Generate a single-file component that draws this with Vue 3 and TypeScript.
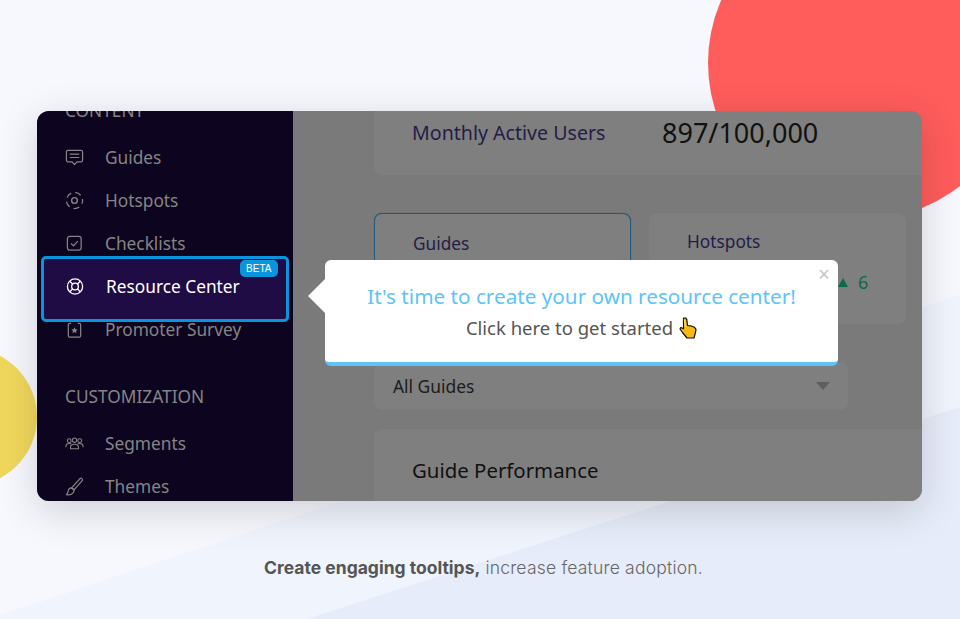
<template>
  <div class="page">
    <div class="band band-light"></div>
    <div class="band band-dark"></div>
    <div class="blob blob-red"></div>
    <div class="blob blob-yellow"></div>

    <div class="window">
      <aside class="sidebar">
        <h4 class="nav-heading first">CONTENT</h4>
        <div class="nav-item">
          <svg class="nav-icon" viewBox="0 0 20 20" fill="none" stroke="currentColor" stroke-width="1.3">
            <path d="M3 2.5h14a1.5 1.5 0 0 1 1.5 1.5v9a1.5 1.5 0 0 1-1.5 1.5h-4.5L10 17.5l-2.500-3H3A1.500 1.500 0 0 1 1.500 13V4A1.500 1.500 0 0 1 3 2.500z" stroke-linejoin="round" />
            <path d="M5 6.500h10M5 10h10" />
          </svg>
          <span>Guides</span>
        </div>
        <div class="nav-item">
          <svg class="nav-icon" viewBox="0 0 20 20" fill="none" stroke="currentColor" stroke-width="1.3">
            <circle cx="10" cy="10" r="8.500" stroke-dasharray="6.500 4.400" stroke-dashoffset="3" />
            <circle cx="10" cy="10" r="3" stroke-width="1.500" />
          </svg>
          <span>Hotspots</span>
        </div>
        <div class="nav-item">
          <svg class="nav-icon" viewBox="0 0 20 20" fill="none" stroke="currentColor" stroke-width="1.3">
            <rect x="2.500" y="2.500" width="14.500" height="14.500" rx="2.500" />
            <path d="M6.500 10l2.500 2.500 4.500-5" />
          </svg>
          <span>Checklists</span>
        </div>
        <div class="nav-item active">
          <svg class="nav-icon" viewBox="0 0 20 20" fill="none" stroke="currentColor" stroke-width="1.400">
            <circle cx="9.500" cy="10" r="8" />
            <circle cx="9.500" cy="10" r="3.500" />
            <path d="M4 4.500l3 3M15 4.500l-3 3M4 15.500l3-3M15 15.500l-3-3" />
          </svg>
          <span>Resource Center</span>
          <em class="badge">BETA</em>
        </div>
        <div class="nav-item">
          <svg class="nav-icon" viewBox="0 0 20 20" fill="none" stroke="currentColor" stroke-width="1.300">
            <path d="M6.500 3.500H5A1.500 1.500 0 0 0 3.500 5v11.500A1.500 1.500 0 0 0 5 18h10a1.500 1.500 0 0 0 1.500-1.500V5A1.500 1.500 0 0 0 15 3.500h-1.500" />
            <path d="M10 7.500l1 2.300 2.400.2-1.800 1.600.6 2.400-2.200-1.300-2.200 1.300.6-2.400L6.600 10l2.400-.2z" fill="currentColor" stroke="none" />
          </svg>
          <span>Promoter Survey</span>
        </div>

        <h4 class="nav-heading">CUSTOMIZATION</h4>
        <div class="nav-item">
          <svg class="nav-icon" viewBox="0 0 20 20" fill="none" stroke="currentColor" stroke-width="1.100">
            <circle cx="4.500" cy="7" r="2" />
            <circle cx="15.500" cy="7" r="2" />
            <circle cx="10" cy="6.500" r="2.300" />
            <path d="M1 14v-1.500c0-1.500 1.200-2.500 3.500-2.500 1 0 1.800.2 2.300.6M19 14v-1.500c0-1.500-1.200-2.500-3.500-2.500-1 0-1.800.2-2.300.6" />
            <path d="M5.800 15.500v-1.500c0-2 1.800-3.300 4.200-3.300s4.200 1.300 4.200 3.300v1.500z" stroke-linejoin="round" />
          </svg>
          <span>Segments</span>
        </div>
        <div class="nav-item">
          <svg class="nav-icon" viewBox="0 0 20 20" fill="none" stroke="currentColor" stroke-width="1.300">
            <path d="M17.500 1.500c1 .6 1.200 1.500.6 2.400L9.500 13.500l-2.500-2L15.500 2c.6-.7 1.300-.9 2-.5z" stroke-linejoin="round" />
            <path d="M7 11.500c-2.500 0-3.500 1.500-3.700 3.500-.1 1.300-.6 2.200-1.800 3.500 3 .5 6.200-.3 7.300-2.200.7-1.100.8-2 .7-2.800z" stroke-linejoin="round" />
          </svg>
          <span>Themes</span>
        </div>
      </aside>

      <main class="main">
        <section class="usage-card">
          <span class="usage-label">Monthly Active Users</span>
          <span class="usage-value">897/100,000</span>
        </section>

        <div class="stat-row">
          <section class="stat-card selected">
            <span class="stat-title">Guides</span>
          </section>
          <section class="stat-card hotspots">
            <span class="stat-title">Hotspots</span>
            <span class="stat-delta"><i class="delta-arrow"></i>6</span>
          </section>
        </div>

        <div class="select-box">
          <span>All Guides</span>
          <i class="caret"></i>
        </div>

        <section class="perf-card">
          <h3>Guide Performance</h3>
        </section>
      </main>

      <div class="tooltip">
        <span class="tooltip-close">×</span>
        <p class="tooltip-title">It's time to create your own resource center!</p>
        <p class="tooltip-sub">
          Click here to get started
          <svg class="hand" viewBox="0 0 18 22">
            <path d="M4.500 1h2l1.300 1.500.7 6 3 .3 4 1.500 1.500 2-.5 3-1.500 5.700H8l-4.500-5.500L1 12l.8-1.500 2.700 1.300z" fill="#f8b912" stroke="#111" stroke-width="1.200" stroke-linejoin="round" />
            <path d="M5.500 2.500l.8 7.500" stroke="#ffd95c" stroke-width="1.500" fill="none" />
          </svg>
        </p>
      </div>
    </div>

    <p class="caption"><strong>Create engaging tooltips,</strong> increase feature adoption.</p>
  </div>
</template>

<script setup lang="ts">
</script>

<style scoped>
.page {
  position: relative;
  width: 960px;
  height: 619px;
  overflow: hidden;
  padding-top: 111px;
  box-sizing: border-box;
  background: #f6f8fd;
  font-family: "Noto Sans", "Open Sans", sans-serif;
}

.band {
  position: absolute;
  inset: 0;
}

.band-light {
  background: #f0f4fd;
  clip-path: polygon(0 615px, 960px 295px, 960px 619px, 0 619px);
}

.band-dark {
  background: #e6ecf9;
  clip-path: polygon(307px 619px, 960px 407px, 960px 619px);
}

.blob {
  position: absolute;
  border-radius: 50%;
}

.blob-red {
  left: 708px;
  top: -93px;
  width: 312px;
  height: 312px;
  background: #ff5c5c;
}

.blob-yellow {
  left: -101.5px;
  top: 348px;
  width: 138px;
  height: 138px;
  background: #f0d75c;
}

.window {
  position: relative;
  display: flex;
  width: 885px;
  height: 390px;
  margin-left: 37px;
  border-radius: 12px;
  background: #7a7a7a;
  overflow: hidden;
  box-shadow: 0 10px 40px rgba(0, 0, 0, 0.16);
}

.sidebar {
  flex: 0 0 256px;
  background: #0d041f;
  color: #858585;
}

.nav-heading {
  height: 30px;
  margin: 31px 0 10px;
  padding-left: 28px;
  font-size: 17.3px;
  font-weight: 400;
  line-height: 30px;
}

.nav-heading.first {
  margin-top: -15px;
}

.nav-item {
  display: flex;
  align-items: center;
  height: 43px;
  padding-left: 28px;
  font-size: 17.3px;
}

.nav-item.active {
  position: relative;
  z-index: 1;
  height: 66px;
  margin: -9px 4px -14px;
  padding: 8px 0 14px 22px;
  box-sizing: border-box;
  border: 3px solid #0a94de;
  border-radius: 5px;
  background: #200c44;
  color: #fff;
}

.nav-icon {
  flex: 0 0 19px;
  width: 19px;
  height: 19px;
  margin-right: 21px;
}

.badge {
  position: absolute;
  top: 1px;
  right: 8px;
  padding: 0 6.5px;
  border-radius: 5px;
  background: #0a94de;
  color: #fff;
  font-family: "Liberation Sans", sans-serif;
  font-size: 10px;
  font-style: normal;
  line-height: 17px;
}

.main {
  flex: 1;
  min-width: 0;
  padding-left: 81px;
}

.usage-card {
  display: flex;
  align-items: center;
  height: 64px;
  padding: 0 0 22px 38px;
  box-sizing: border-box;
  border-radius: 0 0 0 8px;
  background: #7f7f7f;
}

.usage-label {
  width: 250px;
  color: #251c47;
  font-size: 19.6px;
}

.usage-value {
  color: #111;
  font-size: 27px;
}

.stat-row {
  display: flex;
  gap: 18px;
  margin-top: 38px;
}

.stat-card {
  position: relative;
  width: 257px;
  height: 111px;
  box-sizing: border-box;
  padding-left: 38px;
  border-radius: 8px;
  background: #7f7f7f;
  color: #251c47;
  font-size: 17.3px;
}

.stat-card.selected {
  border: 1px solid #24597a;
  padding-top: 18px;
  box-shadow: 0 0 1px #24597a;
}

.stat-card.hotspots {
  padding-top: 17px;
}

.stat-delta {
  position: absolute;
  top: 57px;
  left: 189px;
  display: flex;
  align-items: center;
  gap: 10px;
  color: #0a6b4c;
  font-size: 18px;
}

.delta-arrow {
  width: 0;
  height: 0;
  border: 5px solid transparent;
  border-top: 0;
  border-bottom: 9px solid #0a6b4c;
}

.select-box {
  display: flex;
  align-items: center;
  justify-content: space-between;
  width: 474px;
  height: 48px;
  margin-top: 38px;
  padding: 0 18px 0 19px;
  box-sizing: border-box;
  border-radius: 8px;
  background: #7f7f7f;
  color: #1c1c1c;
  font-size: 17.4px;
}

.caret {
  width: 0;
  height: 0;
  border: 7px solid transparent;
  border-bottom: 0;
  border-top: 8px solid #5e5e5e;
}

.perf-card {
  height: 100px;
  margin-top: 19px;
  padding: 26px 0 0 38px;
  box-sizing: border-box;
  border-radius: 8px 0 0 0;
  background: #7f7f7f;
}

.perf-card h3 {
  margin: 0;
  color: #111;
  font-size: 20.4px;
  font-weight: 400;
  line-height: 30px;
}

.tooltip {
  position: absolute;
  z-index: 2;
  top: 149px;
  left: 288px;
  width: 513px;
  height: 106px;
  padding-top: 21px;
  box-sizing: border-box;
  border-bottom: 4px solid #5bc4fb;
  border-radius: 6px;
  background: #fff;
  text-align: center;
}

.tooltip::before {
  content: "";
  position: absolute;
  top: 18px;
  left: -17px;
  width: 18px;
  height: 36px;
  background: #fff;
  clip-path: polygon(0 50%, 100% 0, 100% 100%);
}

.tooltip-close {
  position: absolute;
  top: 3px;
  right: 8px;
  color: #c5c9cc;
  font-size: 21px;
  line-height: 22px;
}

.tooltip-title {
  margin: 0;
  color: #5bc4fb;
  font-size: 20.7px;
  line-height: 30px;
}

.tooltip-sub {
  display: flex;
  align-items: center;
  justify-content: center;
  gap: 6px;
  margin: 2px 0 0;
  color: #555;
  font-size: 18.5px;
  line-height: 30px;
}

.hand {
  width: 18px;
  height: 22px;
}

.caption {
  position: relative;
  margin: 56px 0 0;
  padding-left: 7px;
  color: #666;
  font-family: Inter, "Open Sans", sans-serif;
  font-size: 17.5px;
  font-weight: 300;
  letter-spacing: 0.2px;
  line-height: 22px;
  text-align: center;
}

.caption strong {
  color: #555;
  font-weight: 700;
  letter-spacing: 0;
}
</style>
